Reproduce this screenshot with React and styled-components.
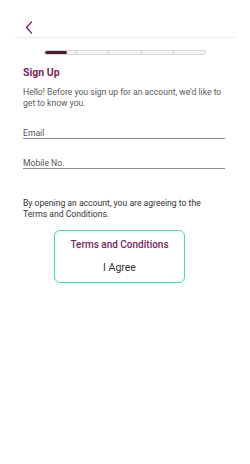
import styled, { createGlobalStyle } from "styled-components"

const GlobalStyle = createGlobalStyle`
html, body {
  margin: 0;
  padding: 0;
  background: #ffffff;
}
body {
  font-family: Roboto, "Noto Sans", sans-serif;
}
`

const Container = styled.div`
width: 250px;
height: 464px;
background: #ffffff;
display: flex;
flex-direction: column;
`

const Header = styled.div`
height: 38px;
margin: 0 15px;
border-bottom: 1.5px solid #ebebeb;
display: flex;
align-items: flex-end;
padding: 0 0 3px 10px;
box-sizing: border-box;
`

const BackButton = styled.button`
border: none;
background: none;
padding: 0;
display: flex;
align-items: center;
cursor: pointer;
`

const ProgressRow = styled.div`
display: flex;
justify-content: center;
margin-top: 12px;
`

const Track = styled.div`
width: 160px;
height: 3px;
border: 0.5px solid #d6d6d6;
border-radius: 3px;
background: #f4f4f4;
display: flex;
position: relative;
overflow: hidden;
`

const Segment = styled.div`
flex: 1;
border-right: ${(p) => (p.last ? "none" : "1px solid #cfcfcf")};
`

const Fill = styled.div`
position: absolute;
left: 0;
top: 0;
bottom: 0;
width: 22px;
background: #4d1a3d;
border-radius: 3px;
`

const Content = styled.div`
padding: 0 25px 0 23px;
display: flex;
flex-direction: column;
`

const Title = styled.h1`
margin: 11px 0 0;
font-size: 10.5px;
line-height: 13px;
font-weight: 700;
color: #7a1f5c;
`

const Intro = styled.p`
margin: 8px 0 0;
font-size: 8.6px;
line-height: 10.5px;
color: #5a5a5a;
`

const Field = styled.label`
display: block;
margin-top: ${(p) => p.top}px;
font-size: 8.6px;
color: #555555;
border-bottom: 1.2px solid #8c8c8c;
padding-bottom: 0;
line-height: 10px;
`

const Notice = styled.p`
margin: 29px 0 0;
font-size: 8.6px;
line-height: 10.5px;
color: #333333;
`

const TermsCard = styled.div`
align-self: flex-start;
margin: 11px 0 0 31px;
width: 131px;
height: 53px;
box-sizing: border-box;
border: 1.5px solid #3fd8c9;
border-radius: 6px;
display: flex;
flex-direction: column;
align-items: center;
justify-content: center;
gap: 11px;
`

const TermsLink = styled.div`
font-size: 10px;
font-weight: 500;
color: #7a1f5c;
`

const AgreeText = styled.div`
font-size: 10.5px;
color: #333333;
`

const ChevronLeft = () => (
    <svg width="8" height="13" viewBox="0 0 8 13" fill="none">
        <path d="M6.5 1 L1.5 6.5 L6.5 12" stroke="#7a1f5c" strokeWidth="1.2" strokeLinecap="round" strokeLinejoin="round" />
    </svg>
)

const App = () => {
    return (
        <Container>
            <GlobalStyle />
            <Header>
                <BackButton aria-label="Back">
                    <ChevronLeft />
                </BackButton>
            </Header>
            <ProgressRow>
                <Track>
                    <Segment />
                    <Segment />
                    <Segment />
                    <Segment />
                    <Segment last />
                    <Fill />
                </Track>
            </ProgressRow>
            <Content>
                <Title>Sign Up</Title>
                <Intro>Hello! Before you sign up for an account, we'd like to get to know you.</Intro>
                <Field top={20}>Email</Field>
                <Field top={19}>Mobile No.</Field>
                <Notice>By opening an account, you are agreeing to the Terms and Conditions.</Notice>
                <TermsCard>
                    <TermsLink>Terms and Conditions</TermsLink>
                    <AgreeText>I Agree</AgreeText>
                </TermsCard>
            </Content>
        </Container>
    )
}

export default App
